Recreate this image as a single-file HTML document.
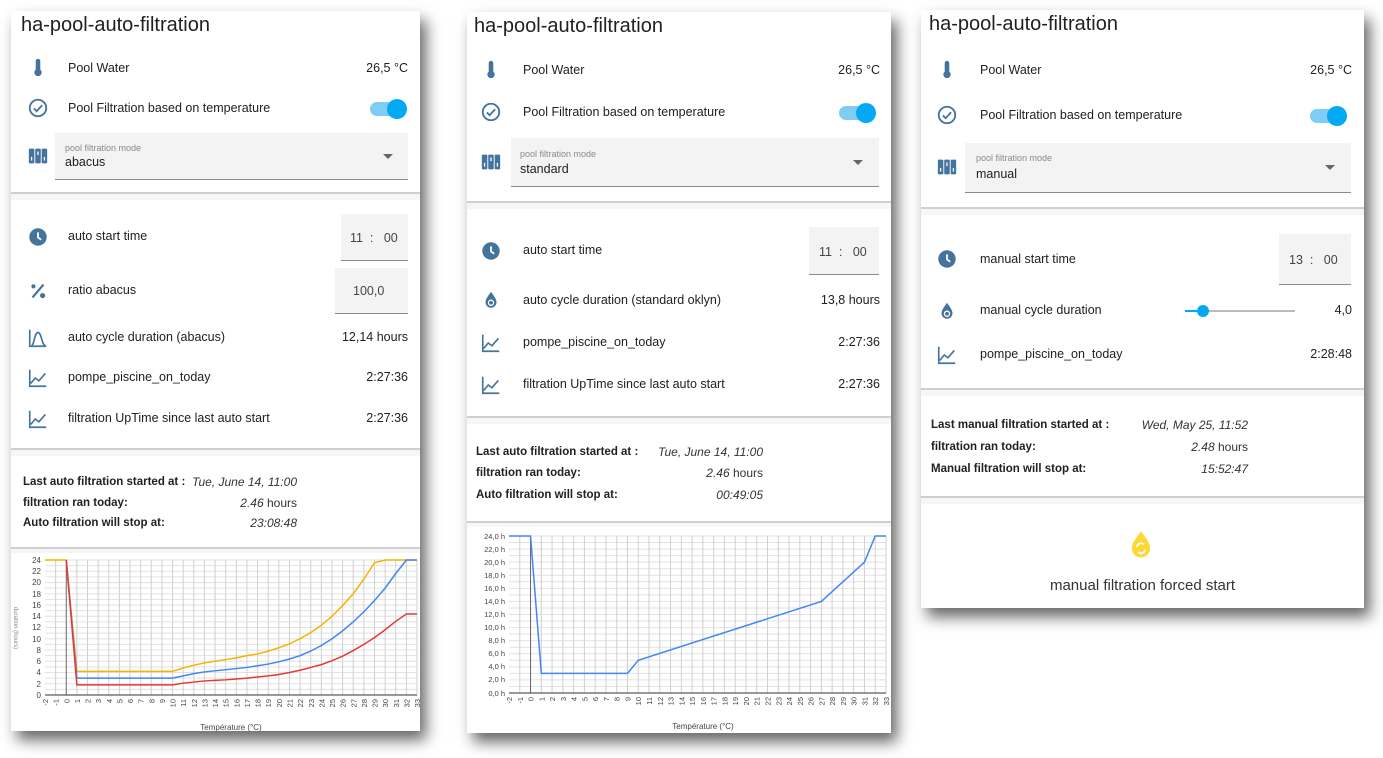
<!DOCTYPE html>
<html><head><meta charset="utf-8"><style>
*{margin:0;padding:0;box-sizing:border-box}
body{width:1383px;height:758px;background:#fff;position:relative;overflow:hidden;font-family:"Liberation Sans",sans-serif;color:#212121}
.card{position:absolute;background:#fff;box-shadow:6px 9px 14px rgba(0,0,0,.6)}
.t{position:absolute;font-size:12.5px;line-height:16px;white-space:nowrap}
.r{text-align:right}
.h{position:absolute;font-size:20px;line-height:24px;color:#212121}
.sep{position:absolute;height:2px;background:#cfcfcf}
.gap{position:absolute;height:6px;background:#f6f6f6}
.box{position:absolute;background:#f3f3f3;border-bottom:1px solid #8a8a8a}
.b{font-weight:bold;font-size:11.5px}
.i{font-style:italic;color:#333;font-size:12px}
.ic{position:absolute;width:22px;height:22px}
.tg{position:absolute;width:34px;height:14px;border-radius:7px;background:#7fcdf5}
.tg:after{content:"";position:absolute;right:-3px;top:-3px;width:20px;height:20px;border-radius:50%;background:#03a9f4}
.lbl{position:absolute;font-size:9px;color:#8a8a8a}
.arr{position:absolute;width:0;height:0;border-left:5px solid transparent;border-right:5px solid transparent;border-top:5px solid #666}
</style></head><body>

<svg width="0" height="0" style="position:absolute">
<defs>
<symbol id="therm" viewBox="0 0 24 24"><path fill="#44739e" d="M12 2a2.5 2.5 0 0 0-2.5 2.5v9.3a4 4 0 1 0 5 0V4.5A2.5 2.5 0 0 0 12 2z"/></symbol>
<symbol id="chk" viewBox="0 0 24 24"><circle cx="12" cy="12" r="9" fill="none" stroke="#44739e" stroke-width="2"/><path d="M7.5 12.5l3 3 6-6.5" fill="none" stroke="#44739e" stroke-width="2"/></symbol>
<symbol id="sel" viewBox="0 0 24 24"><rect x="2" y="4" width="6" height="16" rx="1" fill="#44739e"/><rect x="9" y="4" width="6" height="16" rx="1" fill="#44739e"/><rect x="16" y="4" width="6" height="16" rx="1" fill="#44739e"/><rect x="4.3" y="13" width="1.4" height="4" fill="#fff"/><rect x="11.3" y="7" width="1.4" height="4" fill="#fff"/><rect x="18.3" y="13" width="1.4" height="4" fill="#fff"/></symbol>
<symbol id="clk" viewBox="0 0 24 24"><circle cx="12" cy="12" r="9.5" fill="#44739e"/><path d="M12 7v5.5l3.5 2.5" fill="none" stroke="#fff" stroke-width="2"/></symbol>
<symbol id="pct" viewBox="0 0 24 24"><circle cx="7" cy="7" r="2.3" fill="#44739e"/><circle cx="17" cy="17" r="2.8" fill="#44739e"/><path d="M6 19L18 5" stroke="#44739e" stroke-width="2.4"/></symbol>
<symbol id="bell" viewBox="0 0 24 24"><path d="M3 3v18h18M5 20c3 0 3-14 7-14s4 14 8 14" fill="none" stroke="#44739e" stroke-width="1.8"/></symbol>
<symbol id="line" viewBox="0 0 24 24"><path d="M3 3v18h18M4 18l5-6 4 3 7-8" fill="none" stroke="#44739e" stroke-width="1.8"/></symbol>
<symbol id="drop" viewBox="0 0 24 24"><path d="M12 3c-3 4.5-6 8-6 11.5a6 6 0 0 0 12 0C18 11 15 7.5 12 3z" fill="#44739e"/><circle cx="12" cy="15" r="2.8" fill="none" stroke="#fff" stroke-width="1.4"/></symbol>
</defs></svg>

<!-- CARD 1 -->
<div class="card" style="left:11px;top:11px;width:409px;height:720px"></div>
<div class="h" style="left:21px;top:13px">ha-pool-auto-filtration</div>
<svg class="ic" style="left:27px;top:57px"><use href="#therm"/></svg>
<div class="t" style="left:68px;top:60px">Pool Water</div>
<div class="t r" style="right:975px;top:60px">26,5 °C</div>
<svg class="ic" style="left:27px;top:97px"><use href="#chk"/></svg>
<div class="t" style="left:68px;top:100px">Pool Filtration based on temperature</div>
<div class="tg" style="left:370px;top:102px"></div>
<svg class="ic" style="left:27px;top:145px"><use href="#sel"/></svg>
<div class="box" style="left:55px;top:133px;width:353px;height:47px"></div>
<div class="lbl" style="left:65px;top:143px">pool filtration mode</div>
<div class="t" style="left:65px;top:154px">abacus</div>
<div class="arr" style="left:383px;top:154px"></div>
<div class="sep" style="left:11px;top:192px;width:409px"></div>
<div class="gap" style="left:11px;top:194px;width:409px"></div>

<svg class="ic" style="left:27px;top:226px"><use href="#clk"/></svg>
<div class="t" style="left:68px;top:228px">auto start time</div>
<div class="box" style="left:341px;top:214px;width:67px;height:47px"></div>
<div class="t" style="left:350px;top:230px;color:#444">11 &nbsp;: &nbsp;&nbsp;00</div>
<svg class="ic" style="left:27px;top:280px"><use href="#pct"/></svg>
<div class="t" style="left:68px;top:282px">ratio abacus</div>
<div class="box" style="left:335px;top:268px;width:73px;height:46px"></div>
<div class="t" style="left:353px;top:283px;color:#444">100,0</div>
<svg class="ic" style="left:27px;top:327px"><use href="#bell"/></svg>
<div class="t" style="left:68px;top:329px">auto cycle duration (abacus)</div>
<div class="t r" style="right:975px;top:329px">12,14 hours</div>
<svg class="ic" style="left:27px;top:367px"><use href="#line"/></svg>
<div class="t" style="left:68px;top:369px">pompe_piscine_on_today</div>
<div class="t r" style="right:975px;top:369px">2:27:36</div>
<svg class="ic" style="left:27px;top:408px"><use href="#line"/></svg>
<div class="t" style="left:68px;top:410px">filtration UpTime since last auto start</div>
<div class="t r" style="right:975px;top:410px">2:27:36</div>
<div class="sep" style="left:11px;top:448px;width:409px"></div>
<div class="gap" style="left:11px;top:450px;width:409px"></div>

<div class="t b" style="left:23px;top:474px">Last auto filtration started at :</div>
<div class="t i r" style="right:1086px;top:474px">Tue, June 14, 11:00</div>
<div class="t b" style="left:23px;top:495px">filtration ran today:</div>
<div class="t i r" style="right:1086px;top:495px">2.46 <span style="font-style:normal">hours</span></div>
<div class="t b" style="left:23px;top:515px">Auto filtration will stop at:</div>
<div class="t i r" style="right:1086px;top:515px">23:08:48</div>
<div class="sep" style="left:11px;top:547px;width:409px"></div>
<div class="gap" style="left:11px;top:549px;width:409px;height:4px"></div>

<!-- CARD 2 -->
<div class="card" style="left:467px;top:12px;width:424px;height:721px"></div>
<div class="h" style="left:474px;top:14px">ha-pool-auto-filtration</div>
<svg class="ic" style="left:480px;top:59px"><use href="#therm"/></svg>
<div class="t" style="left:523px;top:62px">Pool Water</div>
<div class="t r" style="right:503px;top:62px">26,5 °C</div>
<svg class="ic" style="left:480px;top:101px"><use href="#chk"/></svg>
<div class="t" style="left:523px;top:104px">Pool Filtration based on temperature</div>
<div class="tg" style="left:839px;top:106px"></div>
<svg class="ic" style="left:480px;top:151px"><use href="#sel"/></svg>
<div class="box" style="left:511px;top:138px;width:368px;height:49px"></div>
<div class="lbl" style="left:520px;top:149px">pool filtration mode</div>
<div class="t" style="left:520px;top:161px">standard</div>
<div class="arr" style="left:853px;top:160px"></div>
<div class="sep" style="left:467px;top:201px;width:424px"></div>
<div class="gap" style="left:467px;top:203px;width:424px"></div>

<svg class="ic" style="left:480px;top:240px"><use href="#clk"/></svg>
<div class="t" style="left:523px;top:242px">auto start time</div>
<div class="box" style="left:809px;top:227px;width:70px;height:48px"></div>
<div class="t" style="left:819px;top:244px;color:#444">11 &nbsp;: &nbsp;&nbsp;00</div>
<svg class="ic" style="left:480px;top:289px"><use href="#drop"/></svg>
<div class="t" style="left:523px;top:292px">auto cycle duration (standard oklyn)</div>
<div class="t r" style="right:503px;top:292px">13,8 hours</div>
<svg class="ic" style="left:480px;top:332px"><use href="#line"/></svg>
<div class="t" style="left:523px;top:334px">pompe_piscine_on_today</div>
<div class="t r" style="right:503px;top:334px">2:27:36</div>
<svg class="ic" style="left:480px;top:374px"><use href="#line"/></svg>
<div class="t" style="left:523px;top:376px">filtration UpTime since last auto start</div>
<div class="t r" style="right:503px;top:376px">2:27:36</div>
<div class="sep" style="left:467px;top:416px;width:424px"></div>
<div class="gap" style="left:467px;top:418px;width:424px"></div>

<div class="t b" style="left:476px;top:444px">Last auto filtration started at :</div>
<div class="t i r" style="right:620px;top:444px">Tue, June 14, 11:00</div>
<div class="t b" style="left:476px;top:465px">filtration ran today:</div>
<div class="t i r" style="right:620px;top:465px">2.46 <span style="font-style:normal">hours</span></div>
<div class="t b" style="left:476px;top:487px">Auto filtration will stop at:</div>
<div class="t i r" style="right:620px;top:487px">00:49:05</div>
<div class="sep" style="left:467px;top:521px;width:424px"></div>
<div class="gap" style="left:467px;top:523px;width:424px;height:4px"></div>

<!-- CARD 3 -->
<div class="card" style="left:921px;top:10px;width:443px;height:598px"></div>
<div class="h" style="left:929px;top:12px">ha-pool-auto-filtration</div>
<svg class="ic" style="left:936px;top:59px"><use href="#therm"/></svg>
<div class="t" style="left:980px;top:62px">Pool Water</div>
<div class="t r" style="right:31px;top:62px">26,5 °C</div>
<svg class="ic" style="left:936px;top:104px"><use href="#chk"/></svg>
<div class="t" style="left:980px;top:107px">Pool Filtration based on temperature</div>
<div class="tg" style="left:1310px;top:109px"></div>
<svg class="ic" style="left:936px;top:156px"><use href="#sel"/></svg>
<div class="box" style="left:965px;top:143px;width:386px;height:50px"></div>
<div class="lbl" style="left:976px;top:153px">pool filtration mode</div>
<div class="t" style="left:976px;top:166px">manual</div>
<div class="arr" style="left:1325px;top:165px"></div>
<div class="sep" style="left:921px;top:207px;width:443px"></div>
<div class="gap" style="left:921px;top:209px;width:443px"></div>

<svg class="ic" style="left:936px;top:248px"><use href="#clk"/></svg>
<div class="t" style="left:980px;top:251px">manual start time</div>
<div class="box" style="left:1279px;top:234px;width:72px;height:51px"></div>
<div class="t" style="left:1289px;top:252px;color:#444">13 &nbsp;: &nbsp;&nbsp;00</div>
<svg class="ic" style="left:936px;top:300px"><use href="#drop"/></svg>
<div class="t" style="left:980px;top:302px">manual cycle duration</div>
<div style="position:absolute;left:1185px;top:310px;width:110px;height:2px;background:#bbb"></div>
<div style="position:absolute;left:1185px;top:310px;width:18px;height:2px;background:#03a9f4"></div>
<div style="position:absolute;left:1197px;top:305px;width:12px;height:12px;border-radius:50%;background:#03a9f4"></div>
<div class="t r" style="right:31px;top:302px">4,0</div>
<svg class="ic" style="left:936px;top:344px"><use href="#line"/></svg>
<div class="t" style="left:980px;top:346px">pompe_piscine_on_today</div>
<div class="t r" style="right:31px;top:346px">2:28:48</div>
<div class="sep" style="left:921px;top:388px;width:443px"></div>
<div class="gap" style="left:921px;top:390px;width:443px"></div>

<div class="t b" style="left:931px;top:417px">Last manual filtration started at :</div>
<div class="t i r" style="right:135px;top:417px">Wed, May 25, 11:52</div>
<div class="t b" style="left:931px;top:439px">filtration ran today:</div>
<div class="t i r" style="right:135px;top:439px">2.48 <span style="font-style:normal">hours</span></div>
<div class="t b" style="left:931px;top:461px">Manual filtration will stop at:</div>
<div class="t i r" style="right:135px;top:461px">15:52:47</div>
<div class="sep" style="left:921px;top:496px;width:443px"></div>
<div class="gap" style="left:921px;top:498px;width:443px"></div>
<svg style="position:absolute;left:1127px;top:530px;width:28px;height:32px" viewBox="0 0 24 28"><path d="M12 1c-4 6-8 10-8 15a8 8 0 0 0 16 0c0-5-4-9-8-15z" fill="#fdd835"/><path d="M8.5 15a3.5 3.5 0 0 1 6-2.3M15.5 17a3.5 3.5 0 0 1-6 2.3" fill="none" stroke="#fff" stroke-width="1.6"/></svg>
<div class="t" style="left:921px;width:443px;text-align:center;top:577px;font-size:15px;line-height:18px;color:#333">manual filtration forced start</div>

<!-- CHARTS -->
<svg style="position:absolute;left:0;top:0" width="1383" height="758" font-family="Liberation Sans" font-size="8" fill="#444">
<g transform="translate(45,695) scale(10.629,-5.625)">
<g fill="none">
<path vector-effect="non-scaling-stroke" stroke="#e2e2e2" d="M0 1H35M0 2H35M0 3H35M0 4H35M0 5H35M0 6H35M0 7H35M0 8H35M0 9H35M0 10H35M0 11H35M0 12H35M0 13H35M0 14H35M0 15H35M0 16H35M0 17H35M0 18H35M0 19H35M0 20H35M0 21H35M0 22H35M0 23H35M0 24H35"/>
<path vector-effect="non-scaling-stroke" stroke="#d0d0d0" d="M1 0V24M3 0V24M4 0V24M5 0V24M6 0V24M7 0V24M8 0V24M9 0V24M10 0V24M11 0V24M12 0V24M13 0V24M14 0V24M15 0V24M16 0V24M17 0V24M18 0V24M19 0V24M20 0V24M21 0V24M22 0V24M23 0V24M24 0V24M25 0V24M26 0V24M27 0V24M28 0V24M29 0V24M30 0V24M31 0V24M32 0V24M33 0V24M34 0V24M35 0V24"/>
<path vector-effect="non-scaling-stroke" stroke="#666" d="M2 0V24"/>
<path vector-effect="non-scaling-stroke" stroke="#333" d="M0 0H35"/>
</g>
<g fill="none" stroke-width="1.5">
<polyline vector-effect="non-scaling-stroke" stroke="#f4b400" points="0,24 2,24 3,4.2 12,4.2 13,4.8 14,5.3 15,5.7 16,6 17,6.3 18,6.6 19,7 20,7.3 21,7.8 22,8.4 23,9.1 24,10 25,11.1 26,12.4 27,14 28,15.9 29,18 30,20.6 31,23.5 32,24 35,24"/>
<polyline vector-effect="non-scaling-stroke" stroke="#4285f4" points="2,24 3,3 12,3 13,3.4 14,3.8 15,4.1 16,4.3 17,4.5 18,4.7 19,4.9 20,5.2 21,5.5 22,5.9 23,6.4 24,7 25,7.8 26,8.8 27,10 28,11.4 29,13 30,14.8 31,16.8 32,19 33,21.6 34,24 35,24"/>
<polyline vector-effect="non-scaling-stroke" stroke="#e53935" points="2,24 3,1.8 12,1.8 13,2.1 14,2.3 15,2.5 16,2.6 17,2.7 18,2.85 19,3 20,3.2 21,3.4 22,3.65 23,4 24,4.4 25,4.9 26,5.4 27,6.1 28,6.9 29,7.9 30,9 31,10.2 32,11.6 33,13.1 34,14.4 35,14.4"/>
</g>
</g>
<g text-anchor="end">
<text x="41" y="563">24</text><text x="41" y="574">22</text><text x="41" y="585">20</text><text x="41" y="597">18</text><text x="41" y="608">16</text><text x="41" y="619">14</text><text x="41" y="630">12</text><text x="41" y="642">10</text><text x="41" y="653">8</text><text x="41" y="664">6</text><text x="41" y="675">4</text><text x="41" y="687">2</text><text x="41" y="698">0</text>
</g>
<g text-anchor="end" font-size="7.5">
<text transform="translate(48,699) rotate(-90)">-2</text><text transform="translate(58.6,699) rotate(-90)">-1</text><text transform="translate(69.3,699) rotate(-90)">0</text><text transform="translate(79.9,699) rotate(-90)">1</text><text transform="translate(90.5,699) rotate(-90)">2</text><text transform="translate(101.2,699) rotate(-90)">3</text><text transform="translate(111.8,699) rotate(-90)">4</text><text transform="translate(122.4,699) rotate(-90)">5</text><text transform="translate(133,699) rotate(-90)">6</text><text transform="translate(143.7,699) rotate(-90)">7</text><text transform="translate(154.3,699) rotate(-90)">8</text><text transform="translate(164.9,699) rotate(-90)">9</text><text transform="translate(175.6,699) rotate(-90)">10</text><text transform="translate(186.2,699) rotate(-90)">11</text><text transform="translate(196.8,699) rotate(-90)">12</text><text transform="translate(207.5,699) rotate(-90)">13</text><text transform="translate(218.1,699) rotate(-90)">14</text><text transform="translate(228.7,699) rotate(-90)">15</text><text transform="translate(239.3,699) rotate(-90)">16</text><text transform="translate(250,699) rotate(-90)">17</text><text transform="translate(260.6,699) rotate(-90)">18</text><text transform="translate(271.2,699) rotate(-90)">19</text><text transform="translate(281.9,699) rotate(-90)">20</text><text transform="translate(292.5,699) rotate(-90)">21</text><text transform="translate(303.1,699) rotate(-90)">22</text><text transform="translate(313.8,699) rotate(-90)">23</text><text transform="translate(324.4,699) rotate(-90)">24</text><text transform="translate(335,699) rotate(-90)">25</text><text transform="translate(345.6,699) rotate(-90)">26</text><text transform="translate(356.3,699) rotate(-90)">27</text><text transform="translate(366.9,699) rotate(-90)">28</text><text transform="translate(377.5,699) rotate(-90)">29</text><text transform="translate(388.2,699) rotate(-90)">30</text><text transform="translate(398.8,699) rotate(-90)">31</text><text transform="translate(409.4,699) rotate(-90)">32</text><text transform="translate(420,699) rotate(-90)">33</text>
</g>
<text x="231" y="730" text-anchor="middle" font-size="8">Température (°C)</text>
<text transform="translate(14,628) rotate(90)" text-anchor="middle" font-size="6" fill="#888">duration (hours)</text>

<g transform="translate(509,693) scale(10.771,-6.542)">
<g fill="none">
<path vector-effect="non-scaling-stroke" stroke="#e2e2e2" d="M0 1H35M0 2H35M0 3H35M0 4H35M0 5H35M0 6H35M0 7H35M0 8H35M0 9H35M0 10H35M0 11H35M0 12H35M0 13H35M0 14H35M0 15H35M0 16H35M0 17H35M0 18H35M0 19H35M0 20H35M0 21H35M0 22H35M0 23H35M0 24H35"/>
<path vector-effect="non-scaling-stroke" stroke="#d0d0d0" d="M1 0V24M3 0V24M4 0V24M5 0V24M6 0V24M7 0V24M8 0V24M9 0V24M10 0V24M11 0V24M12 0V24M13 0V24M14 0V24M15 0V24M16 0V24M17 0V24M18 0V24M19 0V24M20 0V24M21 0V24M22 0V24M23 0V24M24 0V24M25 0V24M26 0V24M27 0V24M28 0V24M29 0V24M30 0V24M31 0V24M32 0V24M33 0V24M34 0V24M35 0V24"/>
<path vector-effect="non-scaling-stroke" stroke="#666" d="M2 0V24"/>
<path vector-effect="non-scaling-stroke" stroke="#333" d="M0 0H35"/>
<polyline vector-effect="non-scaling-stroke" stroke="#4285f4" stroke-width="1.5" points="0,24 2,24 3,3 11,3 12,5 29,14 33,20 34,24 35,24"/>
</g>
</g>
<g text-anchor="end" font-size="7.5">
<text x="505" y="539">24,0 h</text><text x="505" y="552">22,0 h</text><text x="505" y="565">20,0 h</text><text x="505" y="578">18,0 h</text><text x="505" y="591">16,0 h</text><text x="505" y="604">14,0 h</text><text x="505" y="617">12,0 h</text><text x="505" y="630">10,0 h</text><text x="505" y="643">8,0 h</text><text x="505" y="656">6,0 h</text><text x="505" y="669">4,0 h</text><text x="505" y="682">2,0 h</text><text x="505" y="696">0,0 h</text>
</g>
<g text-anchor="end" font-size="7.5">
<text transform="translate(512,697) rotate(-90)">-2</text><text transform="translate(522.8,697) rotate(-90)">-1</text><text transform="translate(533.5,697) rotate(-90)">0</text><text transform="translate(544.3,697) rotate(-90)">1</text><text transform="translate(555.1,697) rotate(-90)">2</text><text transform="translate(565.9,697) rotate(-90)">3</text><text transform="translate(576.6,697) rotate(-90)">4</text><text transform="translate(587.4,697) rotate(-90)">5</text><text transform="translate(598.2,697) rotate(-90)">6</text><text transform="translate(608.9,697) rotate(-90)">7</text><text transform="translate(619.7,697) rotate(-90)">8</text><text transform="translate(630.5,697) rotate(-90)">9</text><text transform="translate(641.2,697) rotate(-90)">10</text><text transform="translate(652,697) rotate(-90)">11</text><text transform="translate(662.8,697) rotate(-90)">12</text><text transform="translate(673.6,697) rotate(-90)">13</text><text transform="translate(684.3,697) rotate(-90)">14</text><text transform="translate(695.1,697) rotate(-90)">15</text><text transform="translate(705.9,697) rotate(-90)">16</text><text transform="translate(716.6,697) rotate(-90)">17</text><text transform="translate(727.4,697) rotate(-90)">18</text><text transform="translate(738.2,697) rotate(-90)">19</text><text transform="translate(748.9,697) rotate(-90)">20</text><text transform="translate(759.7,697) rotate(-90)">21</text><text transform="translate(770.5,697) rotate(-90)">22</text><text transform="translate(781.3,697) rotate(-90)">23</text><text transform="translate(792,697) rotate(-90)">24</text><text transform="translate(802.8,697) rotate(-90)">25</text><text transform="translate(813.6,697) rotate(-90)">26</text><text transform="translate(824.3,697) rotate(-90)">27</text><text transform="translate(835.1,697) rotate(-90)">28</text><text transform="translate(845.9,697) rotate(-90)">29</text><text transform="translate(856.6,697) rotate(-90)">30</text><text transform="translate(867.4,697) rotate(-90)">31</text><text transform="translate(878.2,697) rotate(-90)">32</text><text transform="translate(889,697) rotate(-90)">33</text>
</g>
<text x="703" y="729" text-anchor="middle" font-size="8">Température (°C)</text>
</svg>
</body></html>
